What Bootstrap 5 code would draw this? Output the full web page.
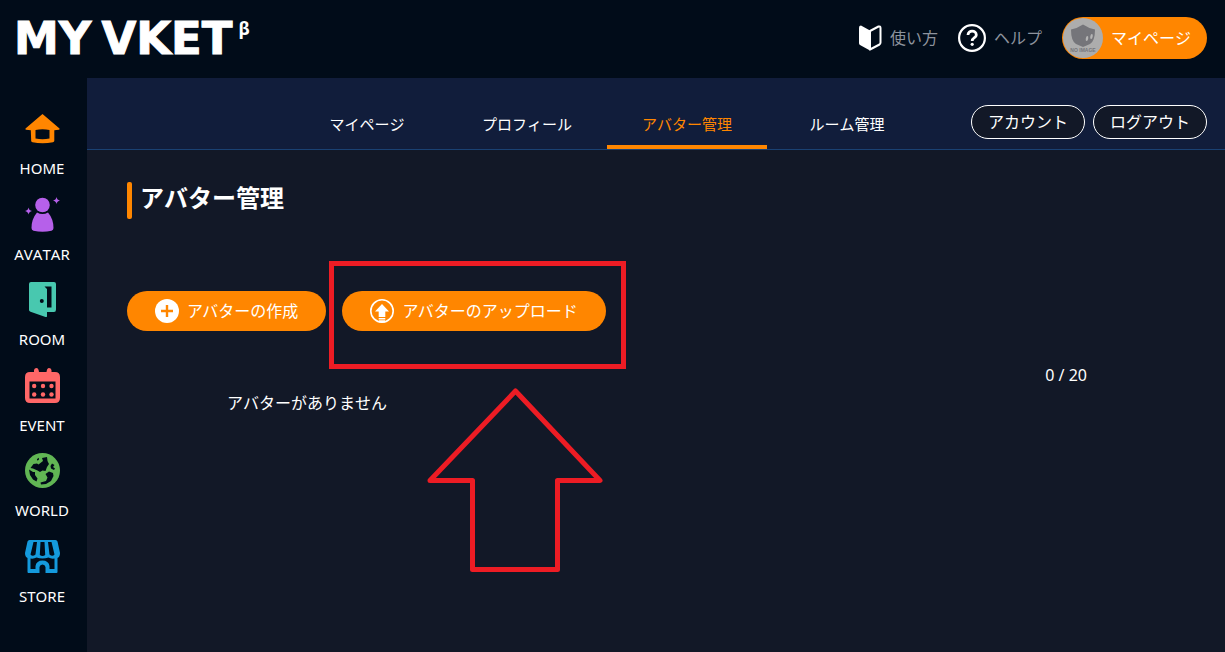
<!DOCTYPE html>
<html lang="ja" data-bs-theme="dark">
<head>
<meta charset="utf-8">
<meta name="viewport" content="width=device-width, initial-scale=1">
<title>アバター管理 | MY VKET</title>
<link href="https://cdn.jsdelivr.net/npm/bootstrap@5.3.0/dist/css/bootstrap.min.css" rel="stylesheet">
<style>
  :root { --ink: #010c19; --panel: #121827; --bar: #111d3b; --accent: #ff8600; --marker: #ed1c24; }
  body { background: var(--panel); color: #fff; font-family: "Noto Sans", "Noto Sans CJK JP", sans-serif; font-size: 16px; line-height: 24px; font-kerning: none; }
  a { text-decoration: none; color: inherit; }
  .site-head { background: var(--ink); height: 78px; padding: 0 18px 2px 14px; }
  .logo-text { font: bold 45px/48px "DejaVu Sans", sans-serif; -webkit-text-stroke: 1px #fff; gap: 10px; padding-top: 2px; }
  .logo-beta { font-size: 18px; line-height: 18px; padding-top: 6px; margin-left: 6px; }
  .head-link { color: #8d939d; gap: 8px; }
  .pill-user { background: var(--accent); height: 42px; padding: 0 16px 0 1px; gap: 8px; }
  .side-nav { background: var(--ink); width: 87px; padding-top: 33px; }
  .side-nav a { font-size: 15px; line-height: 1.5; padding: 0 3px 17px 0; gap: 11px; }
  .sub-bar { background: var(--bar); height: 72px; border-bottom: 1px solid #1a4173; padding: 0 18px 0 200px; }
  .tab-link { flex: 0 1 160px; font-size: 15px; padding-top: 34px; border-bottom: 4px solid transparent; white-space: nowrap; }
  .tab-link.active { color: var(--accent); border-color: var(--accent); }
  .btn-line { background: var(--panel); border: 1px solid #fff; border-radius: 17px; color: #fff; height: 34px; padding: 0 16px; line-height: 30px; white-space: nowrap; }
  .btn-line:hover { background: #26304a; }
  .account-tools { padding-bottom: 10px; }
  .page-body { max-width: 1040px; padding: 32px 40px; }
  .page-title { font-size: 24px; line-height: 32px; font-weight: 700; gap: 8px; margin-bottom: 72px; }
  .title-mark { width: 5px; height: 37px; border-radius: 2px; background: var(--accent); }
  .btn-main { background: var(--accent); color: #fff; border-radius: 20px; height: 40px; padding: 0 28px; gap: 8px; border: 0; white-space: nowrap; }
  .btn-main:hover { background: #e67a00; color: #fff; }
  .count-line { margin-top: 32px; }
  .empty-line { margin-top: 4px; padding-left: 100px; }
  .mark-frame { inset: -30px -20px -38px -13px; border: 5px solid var(--marker); pointer-events: none; }
  .mark-arrow { left: 85px; top: 97px; pointer-events: none; }
</style>
</head>
<body>
<div class="min-vh-100 d-flex flex-column">
  <header class="site-head d-flex align-items-center justify-content-between">
    <a href="#" class="d-flex align-items-start"><span class="logo-text d-flex"><span>MY</span> <span>VKET</span></span><b class="logo-beta">β</b></a>
    <div class="d-flex align-items-center">
      <a href="#" class="head-link d-flex align-items-center me-3 pe-1">
        <svg width="24" height="26" viewBox="0 0 24 26"><path d="M1 2.5Q1 .5 3 .5L12 5.500V25.500L2 20Q1 19.300 1 18Z" fill="#fff"/><path d="M12 6L20.500 1.500Q22.500 1 22.500 3V17.500Q22.500 18.800 21.500 19.500L12 24.500Z" fill="none" stroke="#fff" stroke-width="2" stroke-linejoin="round"/></svg>
        <span>使い方</span>
      </a>
      <a href="#" class="head-link d-flex align-items-center me-3 pe-1">
        <svg width="28" height="28" viewBox="0 0 28 28" fill="none" stroke="#fff"><circle cx="14" cy="14" r="12.900" stroke-width="2.200"/><path d="M10 11C10 5.800 18.300 6 18.300 11C18.300 13.800 14.200 13.500 14.200 17" stroke-width="2.800"/><circle cx="14.200" cy="20.300" r="1.600" fill="#fff" stroke="none"/></svg>
        <span>ヘルプ</span>
      </a>
      <a href="#" class="pill-user d-flex align-items-center rounded-pill">
        <svg width="40" height="40" viewBox="0 0 40 40"><circle cx="20" cy="20" r="20" fill="#adadad"/><path d="M20 6.500Q26 10.500 32 11.500Q32 23 27 26L20 29L13 26Q8 23 8 11.500Q14 10.500 20 6.500Z" fill="#75757a"/><ellipse cx="24" cy="20.500" rx="1.200" ry="2.500" fill="#b5b5b5" transform="rotate(12 24 20.500)"/><ellipse cx="28.500" cy="18.500" rx="1.200" ry="2.500" fill="#b5b5b5" transform="rotate(12 28.500 18.500)"/><text x="20" y="33.500" text-anchor="middle" font-family="Liberation Sans, sans-serif" font-weight="bold" font-size="5" fill="#75757a">NO IMAGE</text></svg>
        <span>マイページ</span>
      </a>
    </div>
  </header>

  <div class="d-flex flex-grow-1">
    <nav class="side-nav flex-shrink-0" aria-label="メイン">
      <a href="#" class="d-flex flex-column align-items-center">
        <svg width="35" height="35" viewBox="0 0 35 35" fill="#ff8600"><path fill-rule="evenodd" d="M17.500 3L34.500 17.500Q35 18.500 34 18.700L29.300 19.200V30Q29 31 28 31.200Q17.500 33.500 7.500 31.200Q6.200 31 6.200 30L5.800 19.200L1 18.700Q0 18.500.5 17.500ZM10.500 19V27.500Q17.500 29 24.500 27.500V19Q17.500 17.500 10.500 19Z"/></svg>
        HOME</a>
      <a href="#" class="d-flex flex-column align-items-center">
        <svg width="35" height="35" viewBox="0 0 35 35" fill="#b660ea"><circle cx="17.500" cy="8" r="7.300"/><path d="M12 15.500Q17.500 18.500 23 15.500Q28.500 22 28.500 31Q28.500 33 26.500 33.700Q17.500 36 8.500 33.700Q6.500 33 6.500 31Q6.500 22 12 15.500Z"/><path d="M31.500 0Q32 3 35 3.500Q32 4 31.500 7Q31 4 28 3.500Q31 3 31.500 0ZM3.500 10.500Q4 13.500 7 14Q4 14.500 3.500 17.500Q3 14.500 0 14Q3 13.500 3.500 10.500Z"/></svg>
        AVATAR</a>
      <a href="#" class="d-flex flex-column align-items-center">
        <svg width="35" height="35" viewBox="0 0 35 35"><path fill="#48c8af" d="M6 0H29Q31 0 31 2V27.500Q31 30 29 30H22V34Q22 35.500 20.500 35L5.500 29.800Q4 29.300 4 28V2Q4 0 6 0Z"/><path d="M19.500 4.500H26.500V25.500H22V7Z" fill="#010c19"/><circle cx="16.800" cy="19" r="2" fill="#010c19"/></svg>
        ROOM</a>
      <a href="#" class="d-flex flex-column align-items-center">
        <svg width="35" height="35" viewBox="0 0 35 35" fill="#ff6767"><path fill-rule="evenodd" d="M9 4V2Q9.500 0 11.500 0Q13.500 0 14 4H21.500Q22 0 24 0Q26 0 26.500 2V4H30Q35 4 35 9V30Q35 35 30 35H5Q0 35 0 30V9Q0 4 5 4ZM4.500 13.500V30.500H30.500V13.500Z"/><circle cx="9.200" cy="18" r="2.200"/><circle cx="18" cy="18" r="2.200"/><circle cx="26.500" cy="18" r="2.200"/><circle cx="9.200" cy="26.500" r="2.200"/><circle cx="18" cy="26.500" r="2.200"/><circle cx="26.500" cy="26.500" r="2.200"/></svg>
        EVENT</a>
      <a href="#" class="d-flex flex-column align-items-center">
        <svg width="35" height="35" viewBox="0 0 35 35"><circle cx="17.500" cy="17.500" r="17.500" fill="#61b654"/><path fill="#010c19" d="M12 6L14 4.800L13.800 7L12 7.500ZM17 5L22 4L22.500 8L24 11L22 14L20.500 18L17.500 17.500L15 19L12.500 17.500L8 15.500L5.500 15L8.500 11L12 10.500L13.500 11.500L18 8ZM27 10.500L29.500 12L28 14L30 15.500L29 17L26 15.500L25.500 13ZM4 16.500L8 19L10 19V22L12.500 25.500L11.500 28.500L8 26.500L5 22ZM24 18.500L28 20L28.500 23L26 28L21 31L16 31.500L15.500 29.500L21 28L22.500 24.500L20.500 21Z"/></svg>
        WORLD</a>
      <a href="#" class="d-flex flex-column align-items-center">
        <svg width="35" height="35" viewBox="0 0 35 35" fill="#149add"><path fill-rule="evenodd" d="M4.500 1H30.500Q32 1 32.500 2.500L35 14Q35 18 32.500 19V33Q32.500 34 31.500 34H20.500V28Q20 25.500 17.500 25.500Q15 25.500 14.500 28V34H3.500Q2.500 34 2.500 33V19Q0 18 0 14L2.500 2.500Q3 1 4.500 1ZM8.500 3L5.500 15.500Q7.500 18 10.500 15.500L12 3ZM15.500 3L14.800 16Q17.500 18 20.200 16L19.500 3ZM23 3L24.500 15.500Q27.500 18 29.500 15.500L26.500 3ZM5.500 19.500V30H10.500V27Q11.500 21.500 17.500 21.500Q23.500 21.500 24.500 27V30H29.500V19.500Q26 20 23.500 18.500Q17.500 20.500 11.500 18.500Q9 20 5.500 19.500Z"/></svg>
        STORE</a>
    </nav>

    <main class="flex-grow-1">
      <div class="sub-bar d-flex justify-content-between">
        <nav class="d-flex flex-grow-1" aria-label="マイページ">
          <a href="#" class="tab-link text-center">マイページ</a>
          <a href="#" class="tab-link text-center">プロフィール</a>
          <a href="#" class="tab-link text-center active" aria-current="page">アバター管理</a>
          <a href="#" class="tab-link text-center">ルーム管理</a>
        </nav>
        <div class="account-tools d-flex gap-2 align-self-end">
          <button type="button" class="btn-line">アカウント</button>
          <button type="button" class="btn-line">ログアウト</button>
        </div>
      </div>
      <section class="page-body">
        <h1 class="page-title d-flex"><span class="title-mark"></span>アバター管理</h1>
        <div class="d-flex gap-3">
          <button type="button" class="btn-main d-flex align-items-center">
            <svg width="24" height="24" viewBox="0 0 24 24"><circle cx="12" cy="12" r="12" fill="#fff"/><path d="M12 6V18M6 12H18" stroke="#ff8600" stroke-width="2.400"/></svg>
            アバターの作成
          </button>
          <div class="position-relative">
            <button type="button" class="btn-main d-flex align-items-center">
              <svg width="24" height="24" viewBox="0 0 24 24"><circle cx="12" cy="12" r="11.200" fill="none" stroke="#fff" stroke-width="1.600"/><path d="M12 5L19 12.500H15.300V18H8.700V12.500H5ZM8.700 19H15.300V20.500H8.700ZM8.700 21.300H15.300V23.500H8.700Z" fill="#fff"/></svg>
              アバターのアップロード
            </button>
            <div class="mark-frame position-absolute"></div>
            <svg class="mark-arrow position-absolute" width="176" height="184" viewBox="0 0 176 184" fill="none" stroke="#ed1c24" stroke-width="5" stroke-linejoin="round"><path d="M88.500 3L173 92.500H130.500V181.500H45.500V92.500H3Z"/></svg>
          </div>
        </div>
        <div class="count-line text-end">0 / 20</div>
        <p class="empty-line mb-0">アバターがありません</p>
      </section>
    </main>
  </div>
</div>
<script src="https://cdn.jsdelivr.net/npm/bootstrap@5.3.0/dist/js/bootstrap.bundle.min.js"></script>
</body>
</html>
